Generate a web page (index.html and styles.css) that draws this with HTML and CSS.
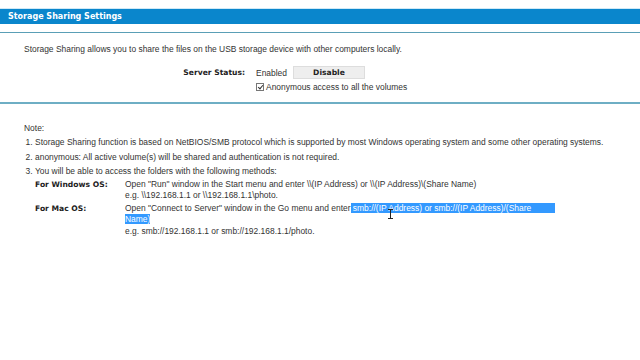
FILE: index.html
```html
<!DOCTYPE html>
<html lang="en">
<head>
  <meta charset="UTF-8" />
  <title>Storage Sharing Settings</title>
  <link rel="stylesheet" href="styles.css">
</head>
<body>

  <div class="title-bar">Storage Sharing Settings</div>
  <div class="rule thin"></div>

  <!-- Settings Section -->
  <section class="settings">
    <p class="intro">Storage Sharing allows you to share the files on the USB storage device with other computers locally.</p>
    <div class="status-grid">
      <span class="label">Server Status:</span>
      <span class="value">Enabled <button class="btn">Disable</button></span>
      <span></span>
      <label class="value check"><input type="checkbox" checked> Anonymous access to all the volumes</label>
    </div>
  </section>
  <div class="rule thick"></div>

  <!-- Notes Section -->
  <section class="notes">
    <p>Note:</p>
    <ol>
      <li>Storage Sharing function is based on NetBIOS/SMB protocol which is supported by most Windows operating system and some other operating systems.</li>
      <li>anonymous: All active volume(s) will be shared and authentication is not required.</li>
      <li>You will be able to access the folders with the following methods:</li>
    </ol>
    <div class="os-grid">
      <span class="label">For Windows OS:</span>
      <div class="os-text">
        <div>Open "Run" window in the Start menu and enter \\(IP Address) or \\(IP Address)\(Share Name)</div>
        <div>e.g. \\192.168.1.1 or \\192.168.1.1\photo.</div>
      </div>
      <span class="label">For Mac OS:</span>
      <div class="os-text mac">
        <div>Open "Connect to Server" window in the Go menu and enter<span class="sel"> smb://(IP Address) or smb://(IP Address)/(Share&nbsp;&nbsp;&nbsp;&nbsp;&nbsp;&nbsp;&nbsp;&nbsp;&nbsp;&nbsp;</span><br><span class="sel">Name)</span><svg class="cursor" width="7" height="10" viewBox="0 0 7 10"><path d="M1 0.5h5M3.5 0.5v9M1 9.5h5" stroke="#222" stroke-width="1" fill="none"/></svg></div>
        <div>e.g. smb://192.168.1.1 or smb://192.168.1.1/photo.</div>
      </div>
    </div>
  </section>

</body>
</html>
```

FILE: styles.css
```css
body {
  margin: 0;
  padding-top: 8px;
  font-family: "Liberation Sans", Arial, sans-serif;
  font-size: 8.45px;
  color: #333;
  background: #fff;
}
.title-bar {
  background: #0a86cc;
  color: #fff;
  font-family: "DejaVu Sans", Verdana, sans-serif;
  font-weight: bold;
  font-size: 8px;
  height: 15px;
  line-height: 15px;
  padding-left: 8px;
  border-top: 1px solid #cfe9f7;
}
.rule {
  background: #5a9fb6;
}
.rule.thin {
  height: 1px;
  margin-top: 8px;
}
.rule.thick {
  height: 2px;
  background: #6eaec4;
}
.settings {
  padding: 10px 0 10px 24px;
}
.intro {
  margin: 0 0 11px;
  line-height: 12px;
}
.status-grid {
  display: grid;
  grid-template-columns: 221px auto;
  column-gap: 11px;
  row-gap: 3px;
  align-items: center;
}
.label {
  font-family: "DejaVu Sans", Verdana, sans-serif;
  font-weight: bold;
  font-size: 7.6px;
  color: #222;
  text-align: right;
}
.value {
  display: flex;
  align-items: center;
  gap: 6px;
}
.btn {
  width: 72px;
  height: 13px;
  padding: 0;
  font-family: "DejaVu Sans", Verdana, sans-serif;
  font-weight: bold;
  font-size: 7.6px;
  color: #222;
  background: #eee;
  border: 1px solid #ddd;
  border-radius: 0;
}
.check {
  gap: 2px;
}
.check input {
  appearance: none;
  position: relative;
  width: 8px;
  height: 8px;
  margin: 0;
  border: 1px solid #777;
  background: #fff;
}
.check input:checked::after {
  content: "";
  position: absolute;
  left: 1.5px;
  top: 0;
  width: 2px;
  height: 4px;
  border: solid #333;
  border-width: 0 1.3px 1.3px 0;
  transform: rotate(40deg);
}
.notes {
  padding: 17px 0 0 24px;
}
.notes p {
  margin: 0;
  line-height: 14px;
}
.notes ol {
  margin: 0;
  padding-left: 11px;
}
.notes li {
  line-height: 14.5px;
}
.os-grid {
  display: grid;
  grid-template-columns: 90px 432px;
  padding-left: 11px;
  line-height: 11.6px;
}
.os-grid .label {
  text-align: left;
}
.os-text {
  margin-bottom: 1px;
}
.sel {
  background: #3399ff;
  color: #fff;
}
.mac > div:first-child {
  position: relative;
}
.cursor {
  position: absolute;
  left: 262px;
  top: 6px;
}
```
